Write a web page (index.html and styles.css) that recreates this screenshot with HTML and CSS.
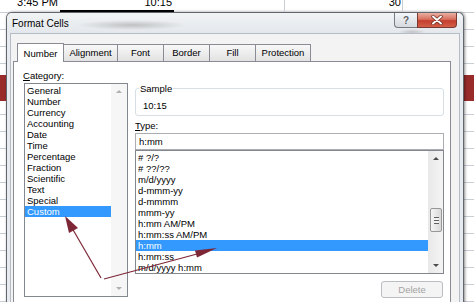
FILE: index.html
```html
<!DOCTYPE html>
<html lang="en">

<head>
  <meta charset="UTF-8">
  <title>Format Cells</title>
  <link rel="stylesheet" href="styles.css">
</head>

<body>
  <!-- Worksheet row peeking above the dialog -->
  <div class="sheet-row">
    <div class="cell cell-a"><span>3:45 PM</span></div>
    <div class="cell cell-b"><span>10:15</span></div>
    <div class="cell cell-c"></div>
    <div class="cell cell-d"><span>30</span></div>
    <div class="cell cell-e"></div>
  </div>

  <div class="dialog">
    <header class="titlebar">
      <span class="title">Format Cells</span>
      <div class="caption-btns">
        <button class="cap-btn help" aria-label="Help">?</button>
        <button class="cap-btn close" aria-label="Close">
          <svg viewBox="0 0 12 10" width="12" height="10">
            <path d="M2 1.5 L10 8.5 M10 1.5 L2 8.5" stroke="#6a2d24" stroke-width="3.4" stroke-linecap="round" />
            <path d="M2 1.5 L10 8.5 M10 1.5 L2 8.5" stroke="#fff" stroke-width="1.9" stroke-linecap="round" />
          </svg>
        </button>
      </div>
    </header>

    <div class="client">
      <nav class="tabs">
        <div class="tab tab-number active">Number</div>
        <div class="tab tab-alignment">Alignment</div>
        <div class="tab tab-font">Font</div>
        <div class="tab tab-border">Border</div>
        <div class="tab tab-fill">Fill</div>
        <div class="tab tab-protection">Protection</div>
      </nav>

      <section class="panel">
        <div class="col-left">
          <label class="label label-category"><u>C</u>ategory:</label>
          <div class="listbox category">
            <ul class="items">
              <li>General</li>
              <li>Number</li>
              <li>Currency</li>
              <li>Accounting</li>
              <li>Date</li>
              <li>Time</li>
              <li>Percentage</li>
              <li>Fraction</li>
              <li>Scientific</li>
              <li>Text</li>
              <li>Special</li>
              <li class="selected">Custom</li>
            </ul>
            <div class="scrollbar disabled">
              <span class="arrow up"></span>
              <span class="arrow down"></span>
            </div>
          </div>
        </div>

        <div class="col-right">
          <fieldset class="sample">
            <legend>Sample</legend>
            <div class="sample-value">10:15</div>
          </fieldset>

          <label class="label"><u>T</u>ype:</label>
          <div class="type-input">h:mm</div>

          <div class="listbox formats">
            <ul class="items">
              <li># ?/?</li>
              <li># ??/??</li>
              <li>m/d/yyyy</li>
              <li>d-mmm-yy</li>
              <li>d-mmmm</li>
              <li>mmm-yy</li>
              <li>h:mm AM/PM</li>
              <li>h:mm:ss AM/PM</li>
              <li class="selected">h:mm</li>
              <li>h:mm:ss</li>
              <li>m/d/yyyy h:mm</li>
            </ul>
            <div class="scrollbar">
              <span class="arrow up"></span>
              <span class="thumb"><span class="grip"></span></span>
              <span class="arrow down"></span>
            </div>
          </div>

          <div class="actions">
            <button class="btn" disabled>Delete</button>
          </div>
        </div>
      </section>
    </div>
  </div>

  <!-- Annotation arrows drawn over the dialog -->
  <svg class="arrows" viewBox="0 0 474 302" width="474" height="302">
    <path d="M101 278 L72 228" />
    <polygon points="65,216 78,228 69,233" />
    <path d="M104 279 L197 254" />
    <polygon points="217,248 195,250.5 197,257.5" />
  </svg>
</body>

</html>
```

FILE: styles.css
```css
/* Base / worksheet behind the dialog */
body {
  width: 474px;
  height: 302px;
  margin: 0;
  overflow: hidden;
  position: relative;
  font-family: "Liberation Sans", Arial, sans-serif;
  font-size: 9.5px;
  color: #000;
  background:
    linear-gradient(to bottom, transparent 75px, #9a2b2b 75px, #9a2b2b 101px, transparent 101px),
    repeating-linear-gradient(to bottom, transparent 0 12px, #c9ced6 12px 13px, transparent 13px 17px),
    #fff;
}

.sheet-row {
  display: flex;
  height: 12px;
}

.cell {
  box-sizing: border-box;
  height: 12px;
  overflow: hidden;
}

.cell span {
  display: block;
  margin-top: -4px;
  padding-right: 2px;
  font-size: 11px;
  line-height: 12px;
  text-align: right;
}

.cell-a {
  width: 60px;
}

.cell-b {
  width: 114px;
  border-bottom: 2px solid #000;
}

.cell-c {
  width: 111px;
  border-right: 1px solid #c9ced6;
}

.cell-d {
  width: 118px;
  border-right: 1px solid #c9ced6;
}

.cell-d span {
  padding-right: 1px;
}

.cell-e {
  flex: 1;
}

/* Dialog frame */
.dialog {
  box-sizing: border-box;
  width: 458px;
  height: 300px;
  margin-left: 6px;
  display: flex;
  flex-direction: column;
  border: 1px solid #62676d;
  border-bottom: none;
  border-radius: 6px 6px 0 0;
  background: #e7eaee;
  box-shadow: 1px 0 3px rgba(0, 0, 0, 0.45);
}

.titlebar {
  height: 20px;
  display: flex;
  justify-content: space-between;
  align-items: flex-start;
  padding: 0 6px 0 5px;
  background:
    radial-gradient(ellipse 55px 5px at 125px 12px, rgba(140, 140, 140, 0.45), transparent),
    radial-gradient(ellipse 14px 3px at 405px 19px, rgba(140, 140, 140, 0.4), transparent),
    linear-gradient(to bottom, #f1f3f5, #e4e8ec);
  border-radius: 5px 5px 0 0;
}

.title {
  padding-top: 2px;
  font-size: 10px;
  line-height: 18px;
}

.caption-btns {
  display: flex;
}

.cap-btn {
  box-sizing: border-box;
  height: 15px;
  margin: 0;
  padding: 0;
  display: flex;
  align-items: center;
  justify-content: center;
  border: 1px solid #777b81;
  border-top: none;
  font-family: inherit;
}

.help {
  width: 23px;
  border-right: none;
  border-radius: 0 0 0 4px;
  background: linear-gradient(to bottom, #f4f6f8, #d5dade);
  color: #5c6065;
  font-size: 10px;
  font-weight: bold;
  text-shadow: 0 0 2px #fff;
}

.close {
  width: 40px;
  border-color: #7a3a30;
  border-radius: 0 0 4px 0;
  background: linear-gradient(to bottom, #eab0a2 0%, #d8705f 45%, #c43f2d 55%, #d4604a 100%);
}

/* Client area with tabs */
.client {
  flex: 1;
  display: flex;
  flex-direction: column;
  margin: 0 3px;
  padding: 9px 8px 0 2px;
  border: 1px solid #b5bcc5;
  border-bottom: none;
  background: #f3f3f3;
}

.tabs {
  height: 19px;
  display: flex;
  align-items: flex-end;
  padding-left: 4px;
  margin-bottom: -1px;
  position: relative;
  z-index: 1;
}

.tab {
  box-sizing: border-box;
  height: 17px;
  margin: 0 0 1px -1px;
  border: 1px solid #898c95;
  border-bottom: none;
  background: linear-gradient(to bottom, #f8f8f8, #e2e2e2);
  line-height: 16px;
  text-align: center;
}

.tab.active {
  height: 19px;
  margin: 0;
  background: #fff;
  line-height: 19px;
  position: relative;
  z-index: 2;
}

.tab-number {
  width: 47px;
}

.tab-alignment {
  width: 55px;
}

.tab-font,
.tab-border,
.tab-fill {
  width: 47px;
}

.tab-protection {
  width: 56px;
}

.panel {
  flex: 1;
  display: flex;
  gap: 7px;
  padding: 8px 6px 0 10px;
  border: 1px solid #898c95;
  background: #fff;
}

.label {
  display: block;
  line-height: 11px;
}

.label-category {
  margin-left: -1px;
}

/* Left column */
.col-left {
  width: 104px;
  display: flex;
  flex-direction: column;
}

/* List boxes */
.listbox {
  box-sizing: border-box;
  display: flex;
  border: 1px solid #828790;
  background: #fff;
}

.items {
  flex: 1;
  margin: 0;
  padding: 1px 0 0;
  list-style: none;
  overflow: hidden;
}

.items li {
  padding-left: 2px;
  line-height: 11px;
  white-space: nowrap;
}

.items li.selected {
  background: #3399ff;
  color: #fff;
}

.category {
  height: 214px;
  margin-top: 2px;
}

.scrollbar {
  width: 16px;
  display: flex;
  flex-direction: column;
  align-items: center;
  background: #f6f6f6;
}

.formats .scrollbar {
  width: 15px;
  background: linear-gradient(to right, #e9e9e9, #f4f4f4);
}

.scrollbar .arrow {
  height: 15px;
  width: 100%;
  display: flex;
  align-items: center;
  justify-content: center;
}

.scrollbar .arrow.down {
  margin-top: auto;
}

.scrollbar .arrow::before {
  content: "";
  border-left: 3px solid transparent;
  border-right: 3px solid transparent;
}

.scrollbar .arrow.up::before {
  border-bottom: 3px solid #4a4a4a;
}

.scrollbar .arrow.down::before {
  border-top: 3px solid #4a4a4a;
}

.scrollbar.disabled .arrow.up::before {
  border-bottom-color: #b0b0b0;
}

.scrollbar.disabled .arrow.down::before {
  border-top-color: #b0b0b0;
}

.thumb {
  box-sizing: border-box;
  width: 12px;
  height: 24px;
  margin: 42px 0 0 1px;
  display: flex;
  align-items: center;
  justify-content: center;
  border: 1px solid #979797;
  border-radius: 2px;
  background: linear-gradient(to right, #f5f5f5, #d9d9d9);
}

.grip {
  width: 5px;
  height: 7px;
  background: repeating-linear-gradient(to bottom, #606060 0 1px, #f4f4f4 1px 3px);
}

/* Right column */
.col-right {
  width: 309px;
  display: flex;
  flex-direction: column;
}

.sample {
  margin: 13px 0 0;
  padding: 0 0 0 7px;
  min-width: 0;
  border: 1px solid #d5dfe5;
  border-radius: 3px;
}

.sample legend {
  margin-left: -4px;
  padding: 0 1px;
  line-height: 11px;
}

.sample-value {
  padding: 6px 0 4px;
  line-height: 11px;
}

.col-right .label {
  margin-top: 4px;
}

.type-input {
  box-sizing: border-box;
  height: 17px;
  margin-top: 2px;
  padding-left: 3px;
  border: 1px solid #abadb3;
  line-height: 15px;
}

.formats {
  height: 124px;
}

.actions {
  display: flex;
  justify-content: flex-end;
  margin-top: 7px;
}

.btn {
  box-sizing: border-box;
  width: 62px;
  height: 17px;
  margin: 0 1px 0 0;
  padding: 0;
  border: 1px solid #b9bdc1;
  border-radius: 3px;
  background: #f4f4f4;
  color: #a3a3a3;
  font-family: inherit;
  font-size: 9.5px;
}

/* Annotation arrows */
.arrows {
  position: absolute;
  top: 0;
  left: 0;
  pointer-events: none;
}

.arrows path {
  fill: none;
  stroke: #7d2636;
  stroke-width: 1.2;
}

.arrows polygon {
  fill: #7d2636;
}
```
